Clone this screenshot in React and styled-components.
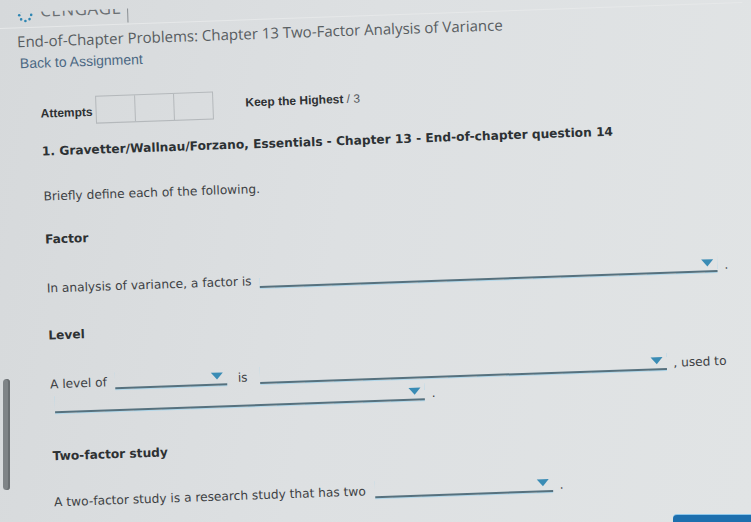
import styled, { createGlobalStyle } from "styled-components";

const GlobalStyle = createGlobalStyle`
  html, body {
    margin: 0;
    padding: 0;
    background: #dcdfe1;
    overflow: hidden;
  }
`;

const App = () => {
  return (
    <>
      <GlobalStyle />
      <Screen>
        <Page>
          <Header>
            <LogoMark viewBox="0 0 16 16">
              <circle cx="8" cy="2" r="1.3" />
              <circle cx="12.2" cy="3.8" r="1.3" />
              <circle cx="14" cy="8" r="1.3" />
              <circle cx="12.2" cy="12.2" r="1.3" />
              <circle cx="3.8" cy="12.2" r="1.3" />
              <circle cx="2" cy="8" r="1.3" />
              <circle cx="3.8" cy="3.8" r="1.3" />
              <circle cx="8" cy="14" r="1.3" />
            </LogoMark>
            <LogoText>CENGAGE</LogoText>
            <Divider />
          </Header>

          <Title>End-of-Chapter Problems: Chapter 13 Two-Factor Analysis of Variance</Title>
          <BackLink>Back to Assignment</BackLink>

          <Body>
            <AttemptsRow>
              <AttemptsLabel>Attempts</AttemptsLabel>
              <AttemptBoxes>
                <AttemptBox />
                <AttemptBox />
                <AttemptBox />
              </AttemptBoxes>
              <Scoring>
                <b>Keep the Highest</b> / 3
              </Scoring>
            </AttemptsRow>

            <QuestionTitle>
              1. Gravetter/Wallnau/Forzano, Essentials - Chapter 13 - End-of-chapter question 14
            </QuestionTitle>

            <Prompt>Briefly define each of the following.</Prompt>

            <Term>Factor</Term>
            <Sentence>
              In analysis of variance, a factor is
              <Select width={458} gap={8} />
              <Stop>.</Stop>
            </Sentence>

            <Term space={29}>Level</Term>
            <Sentence tall>
              A level of
              <Select width={112} gap={8} />
              <Word>is</Word>
              <Select width={407} gap={12} />
              <Stop>, used to</Stop>
              <br />
              <Select width={370} gap={4} />
              <Stop>.</Stop>
            </Sentence>

            <Term space={31}>Two-factor study</Term>
            <Sentence space={27}>
              A two-factor study is a research study that has two
              <Select width={178} gap={9} />
              <Stop>.</Stop>
            </Sentence>
          </Body>
        </Page>
        <Scrollbar />
        <NextButton />
      </Screen>
    </>
  );
};

export default App;

const Select = ({ width, gap }) => (
  <Dropdown width={width} gap={gap}>
    <Caret />
  </Dropdown>
);

const Screen = styled.div`
  position: relative;
  width: 751px;
  height: 522px;
  overflow: hidden;
  background: linear-gradient(100deg, #d6d9db 0%, #dde0e2 45%, #e1e4e5 100%);
`;

const Page = styled.div`
  width: 751px;
  height: 540px;
  transform: rotate(-2deg);
  transform-origin: 375px 261px;
  color: #3a3d3f;
`;

const Header = styled.div`
  display: flex;
  align-items: flex-end;
  height: 15px;
  overflow: hidden;
  padding-left: 26px;
  border-bottom: 1px solid #e6e8e9;
`;

const LogoMark = styled.svg`
  width: 16px;
  height: 16px;
  margin-bottom: 4px;
  fill: #2f86b3;
`;

const LogoText = styled.span`
  font-family: "Open Sans", sans-serif;
  font-size: 17px;
  line-height: 18px;
  letter-spacing: 0.5px;
  color: #6a6f73;
  margin-left: 7px;
  margin-bottom: 7px;
`;

const Divider = styled.span`
  width: 1px;
  height: 16px;
  background: #8a8f93;
  margin-left: 6px;
  margin-bottom: 1px;
`;

const Title = styled.div`
  font-family: "Open Sans", sans-serif;
  font-size: 15px;
  line-height: 22px;
  color: #575c60;
  padding-left: 25px;
  margin-top: 2px;
`;

const BackLink = styled.div`
  font-family: "Liberation Sans", Arial, sans-serif;
  font-size: 14px;
  line-height: 16px;
  color: #4b6883;
  padding-left: 27px;
  margin-top: 3px;
`;

const Body = styled.div`
  padding-left: 46px;
  font-family: "DejaVu Sans", Verdana, sans-serif;
  font-size: 12.2px;
`;

const AttemptsRow = styled.div`
  display: flex;
  align-items: stretch;
  height: 28px;
  margin-top: 27px;
`;

const AttemptsLabel = styled.div`
  align-self: flex-end;
  font-family: "Liberation Sans", Arial, sans-serif;
  font-weight: bold;
  font-size: 12px;
  line-height: 14px;
  color: #2e3133;
  margin-bottom: 5px;
  margin-right: 3px;
`;

const AttemptBoxes = styled.div`
  display: flex;
  border: 1px solid #b4b8bb;
`;

const AttemptBox = styled.div`
  width: 38px;
  border-right: 1px solid #b4b8bb;
  &:last-child {
    border-right: none;
  }
`;

const Scoring = styled.div`
  align-self: flex-start;
  margin-top: 5px;
  margin-left: 32px;
  font-family: "Liberation Sans", Arial, sans-serif;
  font-size: 12px;
  line-height: 14px;
  color: #55595c;
  b {
    color: #2e3133;
  }
`;

const QuestionTitle = styled.div`
  margin-top: 18px;
  font-weight: bold;
  line-height: 16px;
  color: #2c3134;
`;

const Prompt = styled.div`
  margin-top: 29px;
  line-height: 16px;
  color: #3d4144;
`;

const Term = styled.div`
  margin-top: ${({ space }) => space || 27}px;
  font-weight: bold;
  line-height: 16px;
  color: #2e3133;
`;

const Sentence = styled.div`
  margin-top: ${({ space }) => space || 30}px;
  margin-bottom: ${({ tall }) => (tall ? "2px" : "0")};
  line-height: ${({ tall }) => (tall ? "22px" : "20px")};
  color: #3d4144;
`;

const Word = styled.span`
  margin-left: 11px;
`;

const Stop = styled.span`
  margin-left: 7px;
`;

const Dropdown = styled.span`
  display: inline-block;
  position: relative;
  width: ${({ width }) => width}px;
  height: 16px;
  margin-left: ${({ gap }) => gap}px;
  vertical-align: -3px;
  border-bottom: 2px solid #56717e;
  box-shadow: 0 1px 0 #b3d8ea;
`;

const Caret = styled.span`
  position: absolute;
  right: 4px;
  top: 5px;
  width: 0;
  height: 0;
  border-left: 6px solid transparent;
  border-right: 6px solid transparent;
  border-top: 7px solid #3a8cb5;
`;

const Scrollbar = styled.div`
  position: absolute;
  left: 3px;
  top: 379px;
  width: 7px;
  height: 111px;
  border-radius: 4px;
  background: #7f8487;
  box-shadow: inset -2px 0 0 #6a6f72;
`;

const NextButton = styled.div`
  position: absolute;
  right: 0;
  bottom: -10px;
  width: 78px;
  height: 17px;
  border-top-left-radius: 4px;
  background: #1d6fae;
  box-shadow: 0 -1px 0 #8cc6ea;
`;
